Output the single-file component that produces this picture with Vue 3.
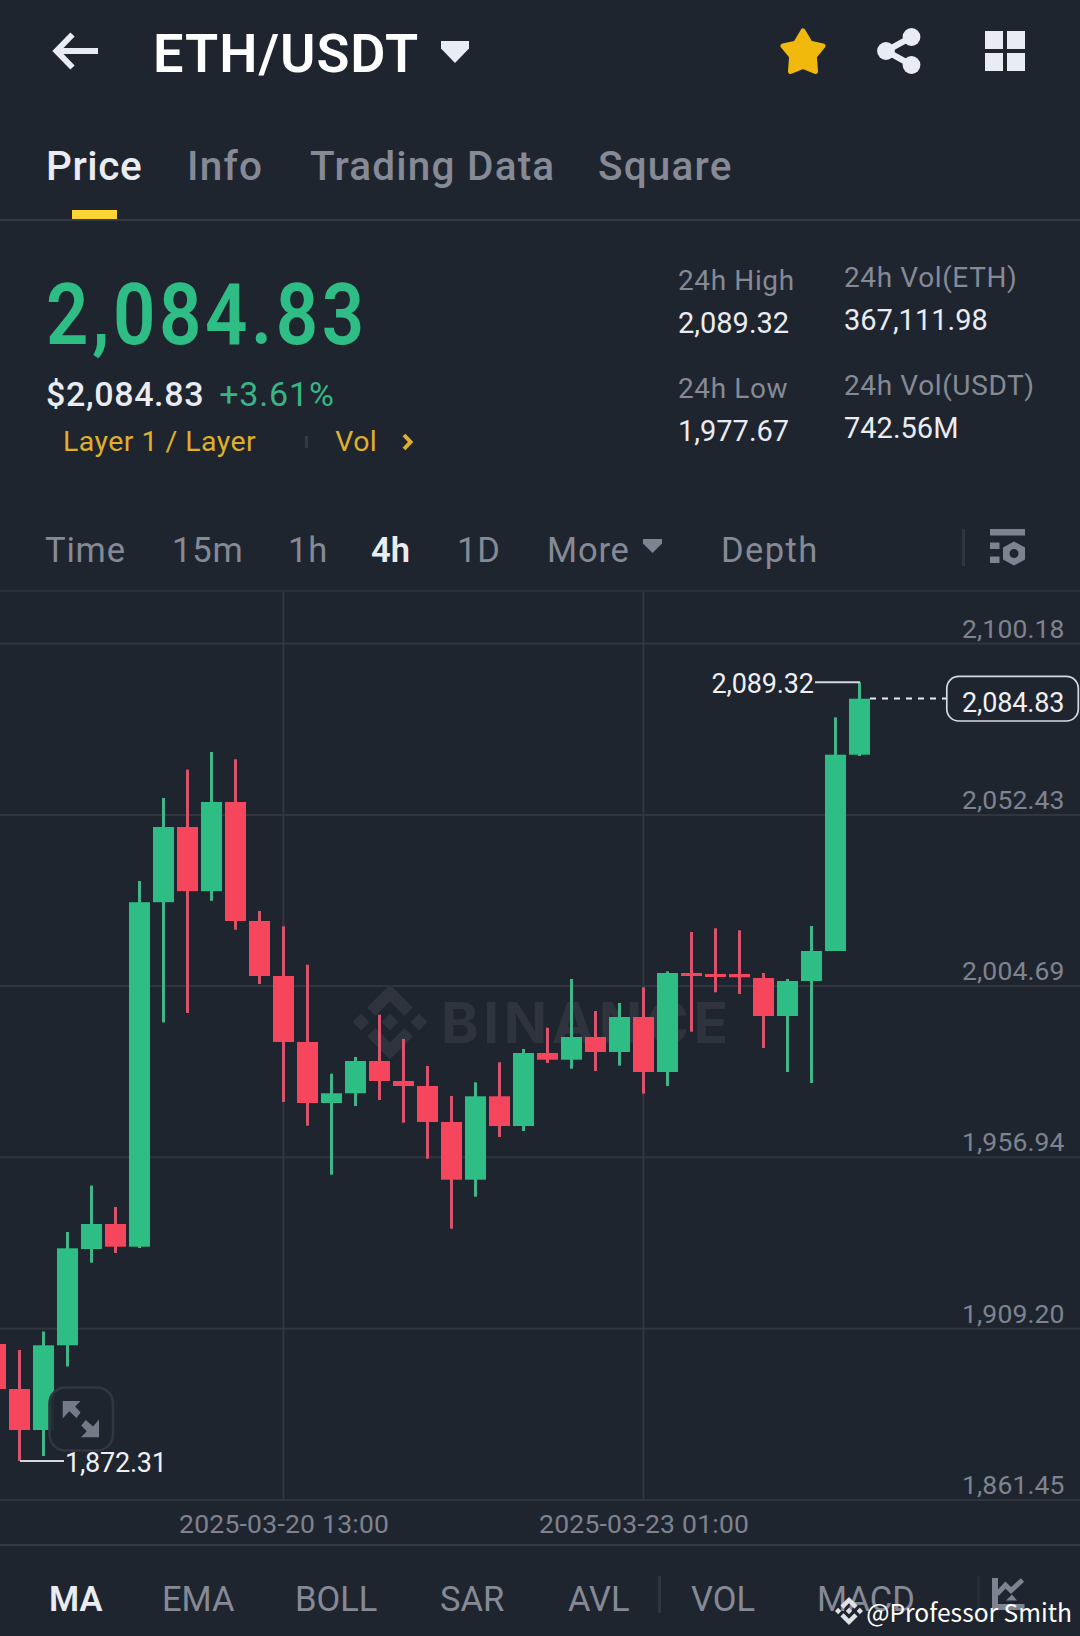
<template>
  <div class="screen">
    <header class="topbar">
      <svg class="back" viewBox="0 0 48 38" aria-label="Back">
        <path d="M20.500 2.500L4.500 19L20.500 35.500M5 19H46" fill="none" stroke="#eaecf3" stroke-width="6" />
      </svg>
      <h1 class="pair">ETH/USDT</h1>
      <svg class="pair-caret" viewBox="0 0 28 22">
        <path d="M0 0H28V7.500L14 22L0 7.500Z" fill="#eaecf3" />
      </svg>
      <div class="actions">
        <svg class="star" viewBox="0 0 46 47">
          <path
            d="M23 3L30.300 15.200L43 18L34.400 28.300L35.500 43.500L23 38.500L10.500 43.500L11.600 28.300L3 18L15.700 15.200Z"
            fill="#f0b90b" stroke="#f0b90b" stroke-width="5" stroke-linejoin="round" />
        </svg>
        <svg class="share" viewBox="0 0 44 46">
          <path d="M34.500 9L9 23L34.500 37" fill="none" stroke="#eaecf3" stroke-width="6" />
          <circle cx="34.500" cy="9" r="8.900" fill="#eaecf3" />
          <circle cx="9" cy="23" r="8.900" fill="#eaecf3" />
          <circle cx="34.500" cy="37" r="8.900" fill="#eaecf3" />
        </svg>
        <div class="tiles"><i></i><i></i><i></i><i></i></div>
      </div>
    </header>

    <nav class="tabs">
      <div v-for="tab in tabs" :key="tab" class="tab" :class="{ active: tab === activeTab }" @click="activeTab = tab">
        <span>{{ tab }}</span>
      </div>
    </nav>

    <section class="ticker">
      <div class="quote">
        <div class="last-price">2,084.83</div>
        <div class="fiat">
          <span class="fiat-value">$2,084.83</span>
          <span class="change">+3.61%</span>
        </div>
        <div class="tags">
          <span>Layer 1 / Layer</span>
          <i class="tag-sep"></i>
          <span class="tag-vol">Vol</span>
          <svg class="chevron" viewBox="0 0 11 18">
            <path d="M2 2L8.500 9L2 16" fill="none" stroke="#dfb02a" stroke-width="4" />
          </svg>
        </div>
      </div>
      <div class="stats">
        <div v-for="s in stats" :key="s.label" class="stat" :class="{ raised: s.raised }">
          <div class="stat-label">{{ s.label }}</div>
          <div class="stat-value">{{ s.value }}</div>
        </div>
      </div>
    </section>

    <nav class="intervals">
      <span v-for="i in intervals" :key="i" :class="{ active: i === activeInterval }" @click="activeInterval = i">
        {{ i }}<svg v-if="i === 'More'" class="more-caret" viewBox="0 0 19 14"><path d="M0 0H19V4.500L9.500 14L0 4.500Z" fill="#7d8391" /></svg>
      </span>
      <i class="divider"></i>
      <svg class="chart-settings" viewBox="0 0 35 37">
        <path d="M0 0H35V6.500H0ZM0 13.500H9.500V20H0ZM0 27.500H9.500V34H0Z" fill="#7d8391" />
        <path
          d="M24 12.500L35 18.500V30.500L24 36.500L13 30.500V18.500ZM24 20A4.500 4.500 0 1 0 24 29A4.500 4.500 0 1 0 24 20Z"
          fill="#7d8391" fill-rule="evenodd" />
      </svg>
    </nav>

    <svg class="chart" viewBox="0 592 1080 952">
      <!-- grid -->
      <g fill="#30353f">
        <rect v-for="g in gridRows" :key="g.label" x="0" :y="g.y - 1" width="1080" height="2" />
        <rect v-for="d in dates" :key="d.label" :x="d.x - 1" y="592" width="2" height="908" />
      </g>

      <!-- watermark -->
      <g fill="#2e333e">
        <svg x="352.500" y="984.500" width="75" height="75" viewBox="0 0 24 24"><path :d="logo" /></svg>
        <text class="brand" x="441" y="1043" textLength="287">BINANCE</text>
      </g>

      <!-- candles -->
      <g v-for="(c, i) in candles" :key="i">
        <rect :x="c.x - 1.5" :y="c.high" width="3" :height="c.low - c.high" :fill="c.up ? '#41b488' : '#d9536a'" />
        <rect :x="c.x - 10.5" :y="c.top" width="21" :height="c.bottom - c.top" :fill="c.up ? '#2ebd85' : '#f6465d'" />
      </g>

      <!-- high / low markers and current price -->
      <path d="M815 682.300H860M20 1461H64" stroke="#d5d7dc" stroke-width="2" />
      <path d="M870 698.500H946" stroke="#eaecf3" stroke-width="2" stroke-dasharray="6 6" />
      <rect x="946.800" y="676.300" width="131.500" height="44.700" rx="12" fill="#1f252f" stroke="#d8dae0" stroke-width="1.700" />
      <g class="mark">
        <text x="711.500" y="693" textLength="102.500">2,089.32</text>
        <text x="962" y="712" textLength="102.500">2,084.83</text>
      </g>

      <g class="axis">
        <text v-for="g in gridRows" :key="g.label" x="962" :y="g.y - 6" textLength="102.500">{{ g.label }}</text>
        <text v-for="d in dates" :key="d.label" :x="d.x - 104.5" y="1532.500" textLength="210">{{ d.label }}</text>
      </g>

      <!-- fullscreen button -->
      <rect x="49.500" y="1387.500" width="63.500" height="63" rx="16" fill="#1f252f" fill-opacity=".94" stroke="#31363f" stroke-width="2.600" />
      <path
        d="M62.700 1401H80.500L75.200 1406.500L80.500 1412.500L76.500 1418L69.300 1411.300L62.700 1418.500ZM99 1437.200H81L86.800 1431.300L81.200 1425.500L85.800 1420L93 1426.500L99 1419.500Z"
        fill="#747a88" />
      <text class="mark" x="65" y="1472" textLength="102">1,872.31</text>
    </svg>

    <footer class="indicators">
      <span v-for="n in overlays" :key="n" :class="{ active: n === activeOverlay }" @click="activeOverlay = n">{{ n }}</span>
      <i class="divider"></i>
      <span>VOL</span>
      <span>MACD</span>
      <i class="divider faint"></i>
      <svg class="draw-icon" viewBox="0 0 33 32">
        <path d="M0 0H6V26H32.500V32H0Z" fill="#7d8391" />
        <path d="M5 16L13.500 7L19 12.500L30.500 2" fill="none" stroke="#7d8391" stroke-width="5" />
        <path d="M14 22.500L20 16.500L25 22.500Z" fill="#7d8391" />
      </svg>
    </footer>

    <div class="author">
      <svg viewBox="0 0 24 24"><path :d="logo" fill="#dfe1e6" /></svg>
      <span>@Professor Smith</span>
    </div>
  </div>
</template>

<script setup>
import { ref } from 'vue';

const tabs = ['Price', 'Info', 'Trading Data', 'Square'];
const activeTab = ref('Price');

const intervals = ['Time', '15m', '1h', '4h', '1D', 'More', 'Depth'];
const activeInterval = ref('4h');

const overlays = ['MA', 'EMA', 'BOLL', 'SAR', 'AVL'];
const activeOverlay = ref('MA');

const stats = [
  { label: '24h High', value: '2,089.32' },
  { label: '24h Vol(ETH)', value: '367,111.98', raised: true },
  { label: '24h Low', value: '1,977.67' },
  { label: '24h Vol(USDT)', value: '742.56M', raised: true }
];

const gridRows = [
  { y: 643.5, label: '2,100.18' },
  { y: 815, label: '2,052.43' },
  { y: 986, label: '2,004.69' },
  { y: 1157.3, label: '1,956.94' },
  { y: 1328.7, label: '1,909.20' },
  { y: 1500, label: '1,861.45' }
];

const dates = [
  { x: 283.5, label: '2025-03-20 13:00' },
  { x: 643.5, label: '2025-03-23 01:00' }
];

// [up, high, body top, body bottom, low]
const candles = [
  [0, 1344, 1344, 1389, 1389],
  [0, 1350, 1389, 1430, 1461],
  [1, 1331.5, 1345.3, 1430, 1456],
  [1, 1232, 1248.3, 1345.3, 1366.5],
  [1, 1185.6, 1224, 1249, 1262.7],
  [0, 1207, 1224, 1246.7, 1253],
  [1, 881, 902.2, 1246.7, 1248],
  [1, 798, 827, 902.2, 1022.4],
  [0, 769.6, 827, 891.2, 1013],
  [1, 752, 802, 891.2, 900.8],
  [0, 759.3, 802, 921, 929.7],
  [0, 911, 921, 976, 984],
  [0, 926.3, 976, 1042, 1102],
  [0, 964.7, 1042, 1103, 1125.7],
  [1, 1073.7, 1093.3, 1103, 1174.7],
  [1, 1057, 1061, 1093.3, 1106],
  [0, 1014.7, 1061, 1081, 1100],
  [0, 1039, 1081, 1086, 1122.7],
  [0, 1066, 1086, 1122, 1158.7],
  [0, 1096, 1122, 1179.7, 1228.7],
  [1, 1082.3, 1096.3, 1179.7, 1196.7],
  [0, 1062.3, 1096.3, 1126, 1137],
  [1, 1049, 1053, 1126, 1131],
  [0, 1027.7, 1053, 1059.7, 1063],
  [1, 979, 1037, 1059.7, 1068.7],
  [0, 1011, 1037, 1052, 1071],
  [1, 1003, 1017, 1052, 1065.7],
  [0, 987.3, 1017, 1072, 1093.7],
  [1, 971.3, 973, 1072, 1086],
  [0, 932, 973, 976, 1031.7],
  [0, 928.3, 974, 977, 992.3],
  [0, 930.3, 974, 977.3, 994],
  [0, 973, 978, 1016, 1048],
  [1, 979, 981, 1016, 1072],
  [1, 926, 951, 981, 1083],
  [1, 717.3, 754.7, 951, 951],
  [1, 682.3, 698.7, 754.7, 756]
].map(([up, high, top, bottom, low], i) => ({ x: -4.5 + i * 24, up, high, top, bottom, low }));

const logo =
  'M16.624 13.920l2.718 2.715-7.353 7.353-7.353-7.352 2.718-2.716 4.635 4.659 4.636-4.659zm4.637-4.637L24 12l-2.715 2.716L18.568 12l2.693-2.717zm-9.272.001l2.716 2.692-2.716 2.717L9.272 12l2.717-2.716zm-9.273-.001L5.409 12l-2.692 2.692L0 12l2.716-2.717zM11.989.012l7.353 7.329-2.718 2.715-4.635-4.635-4.636 4.659-2.717-2.715 7.353-7.353z';
</script>

<style>
body {
  background-color: #1f252f;
}
</style>

<style scoped>
.screen {
  position: relative;
  width: 1080px;
  height: 1636px;
  overflow: hidden;
  background-color: #1f252f;
  color: #858a96;
  font-family: Roboto, "Liberation Sans", sans-serif;
}

svg {
  display: block;
  flex: none;
}

.topbar {
  display: flex;
  align-items: center;
  height: 102px;
  padding: 0 55px 0 52px;
}

.back {
  width: 48px;
  height: 38px;
}

.pair {
  margin: 0 0 0 53px;
  padding-top: 5px;
  width: 288px;
  font-size: 54px;
  line-height: 60px;
  font-weight: 600;
  letter-spacing: 1px;
  color: #fff;
}

.pair-caret {
  width: 28px;
  height: 22px;
  margin-top: 2px;
}

.actions {
  display: flex;
  align-items: center;
  margin-left: auto;
}

.star {
  width: 46px;
  height: 47px;
  margin-right: 51px;
}

.share {
  width: 44px;
  height: 46px;
  margin-right: 64px;
}

.tiles {
  display: grid;
  grid-template-columns: 18px 18px;
  gap: 4px;
}

.tiles i {
  height: 18px;
  background-color: #eaecf3;
}

.tabs {
  display: grid;
  grid-template-columns: 141px 123px 288px 140px;
  height: 119px;
  padding: 34px 0 0 46px;
  box-sizing: border-box;
  border-bottom: 2px solid #333943;
  font-size: 40.500px;
  font-weight: 500;
  line-height: 61px;
  letter-spacing: 1.200px;
}

.tab {
  justify-self: start;
}

.tab.active {
  color: #eaecf3;
  letter-spacing: .600px;
}

.tab.active::after {
  content: "";
  display: block;
  width: 45px;
  height: 9px;
  margin: 13px auto 0;
  background-color: #fcd535;
}

.ticker {
  display: flex;
  justify-content: space-between;
  height: 283px;
  padding: 39px 19px 0 46px;
  box-sizing: border-box;
}

.last-price {
  margin-top: 14px;
  font-size: 84.500px;
  line-height: 84px;
  font-weight: 600;
  letter-spacing: 4px;
  color: #2ebd85;
  transform: scaleX(.88);
  transform-origin: left;
}

.quote {
  width: 400px;
}

.fiat {
  display: flex;
  gap: 15px;
  margin-top: 14px;
  font-size: 34px;
  line-height: 44px;
  letter-spacing: .650px;
}

.fiat-value {
  color: #eaecf3;
  font-weight: 500;
}

.change {
  color: #39b585;
  letter-spacing: .850px;
}

.tags {
  display: flex;
  align-items: center;
  margin-top: 8px;
  padding-left: 17px;
  font-size: 28.500px;
  line-height: 36px;
  letter-spacing: .450px;
  color: #dfb02a;
}

.tag-sep {
  width: 3px;
  height: 12px;
  margin: 0 27px 0 49px;
  background-color: #343943;
}

.tag-vol {
  width: 67px;
}

.chevron {
  width: 11px;
  height: 18px;
}

.stats {
  display: grid;
  grid-template-columns: 166px 217px;
  grid-auto-rows: 108px;
  padding-top: 3px;
}

.stat.raised {
  margin-top: -3px;
}

.stat-label {
  font-size: 28px;
  line-height: 36px;
  letter-spacing: .620px;
}

.stat-value {
  margin-top: 6px;
  font-size: 29px;
  line-height: 36px;
  color: #eaecf3;
}

.intervals {
  display: grid;
  grid-template-columns: 127px 116px 83px 86px 90px 174px 241px 28px 35px;
  align-items: center;
  height: 88px;
  padding-left: 45px;
  box-sizing: border-box;
  border-bottom: 2px solid #2a303a;
  font-size: 34.500px;
  line-height: 40px;
  letter-spacing: .800px;
}

.intervals span {
  display: flex;
  padding-top: 5px;
}

.intervals span:nth-child(7) {
  letter-spacing: 1.400px;
}

.intervals .active,
.indicators .active {
  color: #eaecf3;
  font-weight: 600;
  letter-spacing: 0;
}

.more-caret {
  width: 19px;
  height: 14px;
  margin: 9px 0 0 13px;
}

.divider {
  width: 3px;
  height: 37px;
  background-color: #30363f;
}

.chart-settings {
  width: 35px;
  height: 37px;
}

.chart {
  width: 1080px;
  height: 952px;
}

.brand {
  font: 700 57px Inter, sans-serif;
}

.mark {
  font-size: 27px;
  fill: #eef0f5;
}

.axis {
  font-size: 26.500px;
  fill: #7e838f;
}

.indicators {
  display: grid;
  grid-template-columns: 113px 133px 145px 128px 90px 33px 126px 160px 15px 33px;
  align-items: center;
  height: 92px;
  padding: 6px 0 0 49px;
  box-sizing: border-box;
  border-top: 2px solid #333943;
  font-size: 34.500px;
  line-height: 40px;
}

.indicators span {
  padding-top: 10px;
}

.indicators .faint {
  background-color: #282e38;
}

.draw-icon {
  width: 33px;
  height: 32px;
}

.author {
  position: absolute;
  right: 8px;
  bottom: 7px;
  display: flex;
  align-items: center;
  gap: 3px;
  font-family: "Noto Sans CJK SC", sans-serif;
  font-size: 24.600px;
  line-height: 36px;
  color: #fff;
}

.author svg {
  width: 28px;
  height: 28px;
}
</style>
